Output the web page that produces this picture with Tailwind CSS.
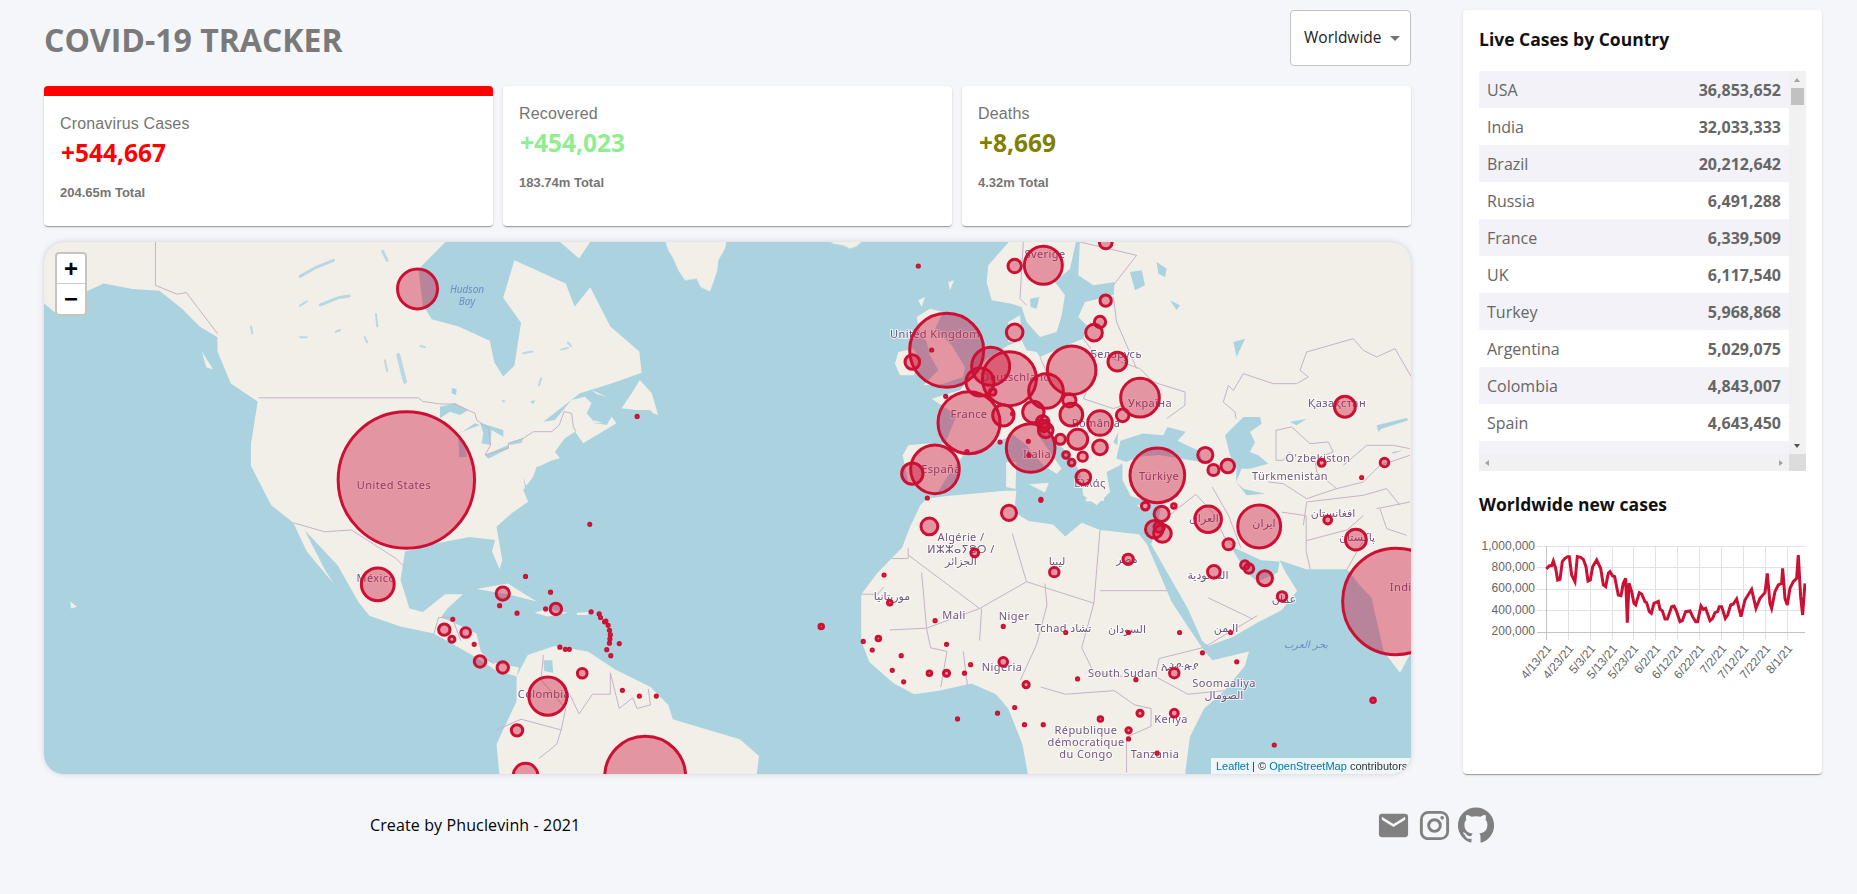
<!DOCTYPE html>
<html lang="en">
<head>
    <meta charset="UTF-8">
    <title>COVID-19 Tracker</title>
    <script src="https://cdn.jsdelivr.net/npm/@tailwindcss/browser@4"></script>
</head>
<body class="bg-[#f5f6fa] font-['Open_Sans',sans-serif] min-h-[894px]">
    <div class="flex justify-between pl-[44px] pr-[35px] pt-[10px]">
        <!-- left column -->
        <div class="w-[1367px]">
            <div class="flex justify-between items-center mb-[20px]">
                <h1 class="text-[32px] font-bold text-[#7a7a7a] leading-none mt-[4px]">COVID-19 TRACKER</h1>
                <div class="w-[121px] h-[56px] bg-white border border-[#c4c4c4] rounded flex items-center pl-[13px] gap-[9px] text-[15.5px] text-[#222] box-border">
                    <span>Worldwide</span>
                    <span class="w-0 h-0 border-l-[5px] border-r-[5px] border-t-[5px] border-l-transparent border-r-transparent border-t-[#757575]"></span>
                </div>
            </div>

            <div class="grid grid-cols-3 gap-[10px] h-[140px]">
                <div class="bg-white rounded overflow-hidden shadow-[0_2px_1px_-1px_rgba(0,0,0,.2),0_1px_1px_0_rgba(0,0,0,.14),0_1px_3px_0_rgba(0,0,0,.12)]">
                    <div class="h-[10px] bg-[#ff0000]"></div>
                    <div class="pt-[16px] px-[16px]">
                        <div class="font-['Liberation_Sans',sans-serif] text-[16px] leading-[24px] tracking-[.15px] text-[#757575]">Cronavirus Cases</div>
                        <div class="text-[24.5px] leading-[36px] font-bold text-[#ff0000] pl-[1px] mt-[-1px]">+544,667</div>
                        <div class="font-['Liberation_Sans',sans-serif] text-[13px] leading-[20px] font-bold text-[#757575] mt-[12px]">204.65m Total</div>
                    </div>
                </div>
                <div class="bg-white rounded overflow-hidden shadow-[0_2px_1px_-1px_rgba(0,0,0,.2),0_1px_1px_0_rgba(0,0,0,.14),0_1px_3px_0_rgba(0,0,0,.12)]">
                    <div class="pt-[16px] px-[16px]">
                        <div class="font-['Liberation_Sans',sans-serif] text-[16px] leading-[24px] tracking-[.15px] text-[#757575]">Recovered</div>
                        <div class="text-[24.5px] leading-[36px] font-bold text-[#90ee90] pl-[1px] mt-[-1px]">+454,023</div>
                        <div class="font-['Liberation_Sans',sans-serif] text-[13px] leading-[20px] font-bold text-[#757575] mt-[12px]">183.74m Total</div>
                    </div>
                </div>
                <div class="bg-white rounded overflow-hidden shadow-[0_2px_1px_-1px_rgba(0,0,0,.2),0_1px_1px_0_rgba(0,0,0,.14),0_1px_3px_0_rgba(0,0,0,.12)]">
                    <div class="pt-[16px] px-[16px]">
                        <div class="font-['Liberation_Sans',sans-serif] text-[16px] leading-[24px] tracking-[.15px] text-[#757575]">Deaths</div>
                        <div class="text-[24.5px] leading-[36px] font-bold text-[#808000] pl-[1px] mt-[-1px]">+8,669</div>
                        <div class="font-['Liberation_Sans',sans-serif] text-[13px] leading-[20px] font-bold text-[#757575] mt-[12px]">4.32m Total</div>
                    </div>
                </div>
            </div>

            <!-- map -->
            <div class="relative mt-[16px] h-[532px] rounded-[20px] overflow-hidden bg-[#aad3df] shadow-[0_0_8px_-4px_gray]">
                <svg id="map" class="block w-[1367px] h-[532px]" viewBox="44 242 1367 532" xmlns="http://www.w3.org/2000/svg">
                    <g class="blur-[0.4px]">
                    <!-- americas, traced in crop coords -->
                    <g transform="translate(30 230) scale(.4464 .3571)">
                        <g fill="#f2efe9">
                            <path d="M0,0 L0,215 L31,205 L60,235 L130,170 L165,150 L230,165 L290,170 L340,220 L380,270 L420,300 L420,340 L450,430 L510,480 L495,600 L495,660 L540,770 L590,820 L620,900 L680,990 L660,950 L615,840 L690,940 L735,1040 L760,1080 L830,1110 L905,1130 L990,1190 L1040,1230 L1090,1250 L1095,1225 L1030,1210 L1010,1180 L1000,1130 L950,1100 L920,1085 L935,1060 L970,1020 L930,1020 L880,1070 L850,1060 L830,980 L840,900 L900,880 L985,860 L1042,868 L1035,900 L1052,950 L1058,925 L1045,831 L1079,793 L1116,761 L1105,728 L1127,691 L1135,663 L1172,644 L1187,639 L1176,621 L1198,583 L1221,565 L1239,597 L1295,555 L1314,541 L1303,523 L1292,546 L1266,541 L1247,513 L1258,485 L1243,467 L1213,476 L1176,532 L1150,537 L1232,457 L1292,434 L1325,420 L1370,400 L1365,340 L1300,270 L1255,160 L1220,215 L1200,150 L1130,110 L1085,85 L1060,190 L1100,260 L1085,380 L1060,410 L1040,370 L1030,310 L960,270 L900,250 L880,210 L870,110 L930,34 L930,0 Z"/>
                            <path d="M1090,1250 L1115,1190 L1175,1165 L1250,1180 L1310,1230 L1390,1280 L1430,1330 L1440,1370 L1520,1400 L1590,1426 L1633,1473 L1624,1568 L1055,1568 L1045,1440 L1090,1320 Z"/>
                            <path d="M1175,20 L1230,80 L1262,20 Z"/>
                            <path d="M1325,499 L1348,457 L1366,420 L1393,457 L1407,518 L1396,513 L1389,504 L1359,504 Z"/>
                            <path d="M1000,1005 L1070,990 L1135,1040 L1070,1020 Z"/>
                            <path d="M1130,1072 L1160,1060 L1205,1072 L1160,1082 Z"/>
                            <path d="M1225,1072 L1250,1070 L1250,1078 L1225,1078 Z"/>
                            <path d="M385,340 L410,390 L395,385 Z"/>
                            <path d="M90,1040 L105,1055 L92,1060 Z"/>
                        </g>
                        <g fill="#aad3df">
                            <path d="M1150,1205 L1170,1205 1172,1240 1152,1235 Z"/>
                        </g>
                        <!-- canadian lakes -->
                        <g fill="none" stroke="#b9d9e2" stroke-linecap="round" stroke-linejoin="round">
                            <path vector-effect="non-scaling-stroke" stroke-width="4" d="M825,350 L840,425"/>
                            <path vector-effect="non-scaling-stroke" stroke-width="3" d="M605,130 L640,105 680,85"/>
                            <path vector-effect="non-scaling-stroke" stroke-width="3" d="M650,210 L690,190 715,185"/>
                            <path vector-effect="non-scaling-stroke" stroke-width="3" d="M790,60 L800,85"/>
                            <path vector-effect="non-scaling-stroke" stroke-width="2" d="M775,235 L778,270 M605,300 L620,300 M685,285 L695,280 M750,300 L755,315 M795,365 L800,395 M875,325 L885,328 M1105,345 L1125,340 M1205,315 L1212,325 M1145,415 L1140,435 M495,270 L498,290 M605,212 L620,200 M1190,335 L1205,330 M950,445 L952,458"/>
                        </g>
                        <g fill="none" stroke="#c6b3c6" stroke-width="1">
                            <path vector-effect="non-scaling-stroke" d="M281,34 L281,155 L330,180 L350,175 L420,290"/>
                            <path vector-effect="non-scaling-stroke" d="M512,470 L870,470 L880,480 L918,487"/>
                            <path vector-effect="non-scaling-stroke" d="M590,820 L660,845 L720,840 L770,880 L820,920 L840,945"/>
                            <path vector-effect="non-scaling-stroke" d="M905,1130 L915,1085 L950,1085 M950,1100 L965,1150 M1015,1195 L1040,1215"/>
                            <path vector-effect="non-scaling-stroke" d="M1150,1190 L1145,1260 L1200,1340 L1190,1400 L1100,1370 L1045,1400 M1190,1400 L1180,1440 L1140,1480 M1205,1290 L1230,1355 L1260,1300 L1300,1300 L1300,1240 L1320,1340 L1350,1310 L1360,1340 L1390,1330 L1385,1285"/>
                        </g>
                    </g>
                    <!-- greenland, iceland -->
                    <g transform="translate(660 242) scale(.3333)" fill="#f2efe9">
                        <path d="M15,-5 L25,25 40,50 55,85 75,115 110,110 122,135 150,148 162,115 172,85 175,55 195,20 200,-5 Z"/>
                        <path d="M505,-5 L520,5 550,10 570,20 590,12 610,-5 Z"/>
                    </g>
                    <!-- lakes and us-canada border -->
                    <g transform="translate(440 380) scale(.3333)">
                        <g fill="#aad3df">
                            <path d="M0,80 L45,70 85,90 60,105 30,95 0,115 Z"/>
                            <path d="M55,170 L75,185 80,230 58,232 Z M60,160 L105,130 120,135 75,152 Z"/>
                            <path d="M120,128 L190,150 190,170 155,150 150,195 125,190 130,160 Z"/>
                            <path d="M135,225 L205,195 207,205 145,236 Z"/>
                            <path d="M205,190 L250,175 245,188 210,195 Z"/>
                            <path d="M35,25 L50,28 48,45 35,40 Z M250,290 L265,340 258,345 Z M270,65 L285,60 280,72 Z M185,60 L198,62 190,68 Z"/>
                        </g>
                        <path fill="#f2efe9" d="M455,30 L500,50 470,42 Z M460,120 L490,130 465,128 Z M290,255 L335,240 295,260 Z"/>
                        <path fill="none" stroke="#c6b3c6" vector-effect="non-scaling-stroke" d="M0,72 L45,72 105,100 110,120 145,145 152,195 135,225 205,205 205,190 250,175 280,155 335,155 358,135 372,95 395,100 400,140 408,155"/>
                    </g>
                    <!-- africa, asia -->
                    <g transform="translate(800 230) scale(.4082 .3571)">
                        <g fill="#f2efe9">
                            <path d="M312,752 L360,745 430,738 500,730 530,730 525,790 560,815 620,825 650,858 690,820 735,840 830,852 850,880 880,960 910,1040 950,1110 985,1170 1010,1205 1100,1180 1090,1220 1040,1290 990,1340 955,1420 935,1600 570,1600 545,1440 510,1340 480,1300 420,1270 340,1290 280,1300 230,1270 170,1210 150,1150 150,1020 190,960 250,890 270,830 295,770 Z"/>
                            <path d="M775,0 L1700,0 L1700,1100 L1498,1180 1470,1240 1430,1180 1400,1030 1375,1000 1340,950 1240,950 1175,925 1190,960 1218,1010 1180,1065 1120,1100 1060,1140 1000,1165 985,1150 950,1060 900,960 860,880 875,830 885,770 850,760 810,745 790,700 790,655 775,640 780,560 760,450 Z"/>
                            <path d="M560,712 L610,708 600,735 Z"/>
                            <path d="M505,650 L530,650 528,725 505,720 Z"/>
                            <path d="M700,752 L745,748 745,758 700,760 Z"/>
                            <path d="M825,770 L860,765 840,785 Z"/>
                        </g>
                        <g fill="#aad3df">
                            <path d="M1055,885 L1130,925 1175,928 1170,960 1120,985 1095,960 1065,905 Z"/>
                        </g>
                    </g>
                    <!-- europe -->
                    <g transform="translate(880 242) scale(.3333)">
                        <g fill="#f2efe9">
                            <path d="M600,-10 L595,100 640,130 720,118 740,145 680,165 615,180 595,225 620,250 610,290 560,310 480,345 470,330 440,325 425,295 385,310 320,350 270,410 240,445 155,470 230,520 195,605 130,605 85,610 68,640 85,720 130,745 170,755 205,700 250,640 330,610 400,578 440,610 490,670 530,695 545,680 510,630 475,580 480,562 520,590 570,640 600,690 610,760 650,790 690,750 680,690 720,670 745,640 700,600 720,560 790,555 850,530 960,590 960,-10 Z"/>
                            <path d="M395,-10 L360,30 325,70 320,120 335,175 395,185 425,195 440,240 480,285 530,270 545,220 555,160 525,120 570,80 590,-10 Z"/>
                            <path d="M385,240 L420,220 428,292 385,300 Z"/>
                            <path d="M110,225 L150,200 190,210 165,260 215,310 255,375 250,405 190,425 130,430 175,385 150,340 140,300 120,270 Z"/>
                            <path d="M55,330 L100,320 125,360 100,400 60,400 45,365 Z"/>
                            <path d="M115,175 L135,165 125,195 Z"/>
                            <path d="M205,120 L222,115 210,145 Z"/>
                        </g>
                        <g fill="#aad3df">
                            <path d="M750,90 L785,85 795,130 765,145 Z"/>
                            <path d="M830,60 L860,80 855,105 835,95 Z"/>
                            <path d="M450,170 L478,165 470,200 452,195 Z"/>
                            <path d="M870,175 L900,190 890,205 Z"/>
                        </g>
                        <g fill="none" stroke="#c6b3c6">
                            <path vector-effect="non-scaling-stroke" d="M430,0 L420,170 L440,190 M480,345 L500,390 M610,290 L640,330 L780,380 L820,420 L915,450 L915,490 L860,530 M640,330 L645,395 L610,470 L700,500 L730,490 M600,0 L770,40 L700,130 M700,165 L710,240 L770,380"/>
                        </g>
                    </g>
                    <!-- black sea etc -->
                    <g transform="translate(800 230) scale(.4082 .3571)">
                        <path fill="#aad3df" d="M775,640 L785,590 840,570 890,575 900,552 945,565 925,590 980,620 985,650 930,640 880,630 830,635 800,650 Z"/>
                        <path fill="none" stroke="#c6b3c6" vector-effect="non-scaling-stroke" d="M265,910 L440,1060 555,985 720,1045 735,840 M555,985 L520,850 M298,960 L310,1115 440,1060 M220,1120 L310,1115 M150,1020 L190,1020 205,1000 M225,920 L265,920 265,890 M600,990 L605,1050 580,1160 M735,1010 L900,1010 M720,1045 L690,1170 720,1240 790,1250 M445,1060 L440,1150 M310,1115 L320,1170 L360,1180 L345,1280 M400,1180 L410,1275 M580,1160 L540,1260 M590,1280 L650,1300 L770,1290 L820,1330 L860,1340 L860,1390 L800,1420 L800,1520 M880,1200 L870,1250 L950,1300 L1040,1290 M880,1200 L985,1170 M995,1165 L1120,1080 M1000,1030 L1110,1090 M870,830 L970,740 L1010,790 L1040,860 L1060,885 M1010,720 L1050,800 L1080,890 M1180,790 L1240,800 L1240,900 L1250,950 M1240,870 L1340,840 L1380,800 M1380,870 L1340,950"/>
                    </g>
                    <!-- central asia -->
                    <g transform="translate(1200 242) scale(.3333)">
                        <path fill="#aad3df" d="M130,525 L180,525 185,545 150,570 165,600 150,630 175,640 205,665 150,680 125,680 108,720 130,740 195,755 140,760 108,720 110,680 90,640 75,580 Z"/>
                        <path fill="#aad3df" d="M530,550 L620,528 625,535 545,560 535,570 Z M575,630 L610,625 580,635 Z M270,540 L320,530 290,550 Z M100,300 L135,290 110,345 Z"/>
                        <path fill="none" stroke="#c6b3c6" vector-effect="non-scaling-stroke" d="M70,480 L85,430 100,445 130,395 220,425 290,425 325,405 300,385 320,330 460,290 490,325 530,345 585,320 640,415 M70,480 L105,510 108,530 M228,565 L275,555 330,605 385,600 400,630 345,650 350,690 410,740 M228,565 L228,655 250,655 270,630 M205,720 L250,725 320,770 410,740 490,720 M320,780 L310,850 M530,800 L630,780 M430,670 L500,610 580,610 630,620 M490,720 L540,670 630,640 M320,780 L490,760 560,740 600,790 M540,800 L560,860 620,880"/>
                    </g>
                    </g>

                    <!-- labels -->
                    <g font-family="'Noto Sans','DejaVu Sans',sans-serif" font-size="11" letter-spacing=".4" fill="#70557a" text-anchor="middle" dominant-baseline="middle" stroke="#ffffff" stroke-opacity=".7" stroke-width="2" paint-order="stroke">
                        <text x="394" y="486">United States</text>
                        <text x="376" y="579">México</text>
                        <text x="544" y="695">Colombia</text>
                        <text x="935" y="335">United Kingdom</text>
                        <text x="1016" y="378">Deutschland</text>
                        <text x="969" y="415">France</text>
                        <text x="941" y="470">España</text>
                        <text x="1037" y="455">Italia</text>
                        <text x="1045" y="255">Sverige</text>
                        <text x="1116" y="355">Беларусь</text>
                        <text x="1150" y="404">Україна</text>
                        <text x="1096" y="424">România</text>
                        <text x="1159" y="477">Türkiye</text>
                        <text x="1090" y="484">Ελλάς</text>
                        <text x="1337" y="404">Қазақстан</text>
                        <text x="1318" y="459">O'zbekiston</text>
                        <text x="1290" y="477">Türkmenistan</text>
                        <text x="1204" y="519">العراق</text>
                        <text x="1264" y="524">ایران</text>
                        <text x="1333" y="514">افغانستان</text>
                        <text x="1357" y="538">پاکستان</text>
                        <text x="1404" y="588">India</text>
                        <text x="961" y="538">Algérie /</text>
                        <text x="961" y="550">ⵍⵣⵣⴰⵢⴻⵔ /</text>
                        <text x="961" y="562">الجزائر</text>
                        <text x="1057" y="562">ليبيا</text>
                        <text x="1127" y="560">مصر</text>
                        <text x="1208" y="576">السعودية</text>
                        <text x="892" y="597">موريتانيا</text>
                        <text x="954" y="616">Mali</text>
                        <text x="1014" y="617">Niger</text>
                        <text x="1063" y="629">Tchad تشاد</text>
                        <text x="1127" y="630">السودان</text>
                        <text x="1226" y="629">اليمن</text>
                        <text x="1284" y="600">عمان</text>
                        <text x="1002" y="668">Nigeria</text>
                        <text x="1123" y="674">South Sudan</text>
                        <text x="1180" y="667">ኢትዮጵያ</text>
                        <text x="1224" y="684">Soomaaliya</text>
                        <text x="1224" y="696">الصومال</text>
                        <text x="1086" y="731">République</text>
                        <text x="1086" y="743">démocratique</text>
                        <text x="1086" y="755">du Congo</text>
                        <text x="1171" y="720">Kenya</text>
                        <text x="1155" y="755">Tanzania</text>
                    </g>
                    <g font-family="'Noto Sans','DejaVu Sans',sans-serif" font-size="10" font-style="italic" fill="#6a8cbf" text-anchor="middle" dominant-baseline="middle">
                        <text x="467" y="290">Hudson</text>
                        <text x="467" y="302">Bay</text>
                        <text x="1306" y="645">بحر العرب</text>
                    </g>
                    <g id="circles"></g>
                </svg>

                <!-- zoom control -->
                <div class="absolute left-[11px] top-[10px] w-[28px] border-2 border-[#c5c5c0] rounded bg-white font-['Liberation_Sans',sans-serif] text-black box-content">
                    <div class="h-[30px] flex items-center justify-center text-[24px] font-bold border-b border-[#ccc]">+</div>
                    <div class="h-[30px] flex items-center justify-center text-[24px] font-bold">−</div>
                </div>
                <div class="absolute right-0 bottom-0 h-[16px] w-[200px] bg-white/80 font-['Liberation_Sans',sans-serif] text-[11px] leading-[16px] pl-[5px] text-[#333] whitespace-nowrap overflow-hidden">
                    <span class="text-[#0078a8]">Leaflet</span> | © <span class="text-[#0078a8]">OpenStreetMap</span> contributors
                </div>
            </div>
        </div>

        <!-- right column -->
        <div class="w-[359px] h-[764px] bg-white rounded p-[16px] box-border shadow-[0_2px_1px_-1px_rgba(0,0,0,.2),0_1px_1px_0_rgba(0,0,0,.14),0_1px_3px_0_rgba(0,0,0,.12)]">
            <h3 class="text-[17.5px] leading-[26px] font-bold text-[#111]">Live Cases by Country</h3>
            <div class="grid grid-cols-[310px_17px] grid-rows-[383px_17px] mt-[19px] w-[327px] h-[400px]">
                <div class="overflow-hidden text-[#666] text-[16px]">
                    <div class="flex justify-between items-center px-[8px] h-[37px] bg-[#f3f2f8]"><span>USA</span><b>36,853,652</b></div>
                    <div class="flex justify-between items-center px-[8px] h-[37px]"><span>India</span><b>32,033,333</b></div>
                    <div class="flex justify-between items-center px-[8px] h-[37px] bg-[#f3f2f8]"><span>Brazil</span><b>20,212,642</b></div>
                    <div class="flex justify-between items-center px-[8px] h-[37px]"><span>Russia</span><b>6,491,288</b></div>
                    <div class="flex justify-between items-center px-[8px] h-[37px] bg-[#f3f2f8]"><span>France</span><b>6,339,509</b></div>
                    <div class="flex justify-between items-center px-[8px] h-[37px]"><span>UK</span><b>6,117,540</b></div>
                    <div class="flex justify-between items-center px-[8px] h-[37px] bg-[#f3f2f8]"><span>Turkey</span><b>5,968,868</b></div>
                    <div class="flex justify-between items-center px-[8px] h-[37px]"><span>Argentina</span><b>5,029,075</b></div>
                    <div class="flex justify-between items-center px-[8px] h-[37px] bg-[#f3f2f8]"><span>Colombia</span><b>4,843,007</b></div>
                    <div class="flex justify-between items-center px-[8px] h-[37px]"><span>Spain</span><b>4,643,450</b></div>
                    <div class="h-[37px] bg-[#f3f2f8]"></div>
                </div>
                <!-- scrollbars -->
                <div class="relative bg-[#f1f1f1]">
                    <span class="absolute left-[5px] top-[7px] w-0 h-0 border-l-[3.5px] border-r-[3.5px] border-b-[4px] border-l-transparent border-r-transparent border-b-[#a3a3a3]"></span>
                    <div class="absolute left-[2px] top-[17px] w-[13px] h-[17px] bg-[#c1c1c1]"></div>
                    <span class="absolute left-[5px] bottom-[6px] w-0 h-0 border-l-[3.5px] border-r-[3.5px] border-t-[4px] border-l-transparent border-r-transparent border-t-[#505050]"></span>
                </div>
                <div class="flex justify-between items-center px-[6px] bg-[#f1f1f1]">
                    <span class="w-0 h-0 border-t-[3.5px] border-b-[3.5px] border-r-[4px] border-t-transparent border-b-transparent border-r-[#a3a3a3]"></span>
                    <span class="w-0 h-0 border-t-[3.5px] border-b-[3.5px] border-l-[4px] border-t-transparent border-b-transparent border-l-[#a3a3a3]"></span>
                </div>
                <div class="bg-[#dcdcdc]"></div>
            </div>

            <h3 class="text-[17.5px] leading-[26px] font-bold text-[#111] tracking-[.05px] mt-[20px]">Worldwide new cases</h3>
            <svg class="block w-[327px] h-[170px] mt-[13px]" viewBox="1479 530 327 170" xmlns="http://www.w3.org/2000/svg">
                <g stroke="#e2e2e2" stroke-width="1">
                    <path d="M1537,546.5H1805M1537,567.5H1805M1537,589.5H1805M1537,610.5H1805"/>
                    <path d="M1568.5,546V640M1590.5,546V640M1612.5,546V640M1633.5,546V640M1655.5,546V640M1677.5,546V640M1699.5,546V640M1721.5,546V640M1743.5,546V640M1765.5,546V640M1787.5,546V640"/>
                </g>
                <path d="M1537,632.5H1805M1546.5,546V640" stroke="#c4c4c4" stroke-width="1" fill="none"/>
                <g font-family="'Liberation Sans',Arial,sans-serif" font-size="12" fill="#666" text-anchor="end" dominant-baseline="middle">
                    <text x="1535" y="546.5">1,000,000</text>
                    <text x="1535" y="567.5">800,000</text>
                    <text x="1535" y="589">600,000</text>
                    <text x="1535" y="610.5">400,000</text>
                    <text x="1535" y="632">200,000</text>
                </g>
                <g font-family="'Liberation Sans',Arial,sans-serif" font-size="12" fill="#666" text-anchor="end">
                    <text transform="translate(1552 649) rotate(-50)">4/13/21</text>
                    <text transform="translate(1574 649) rotate(-50)">4/23/21</text>
                    <text transform="translate(1596 649) rotate(-50)">5/3/21</text>
                    <text transform="translate(1618 649) rotate(-50)">5/13/21</text>
                    <text transform="translate(1639 649) rotate(-50)">5/23/21</text>
                    <text transform="translate(1661 649) rotate(-50)">6/2/21</text>
                    <text transform="translate(1683 649) rotate(-50)">6/12/21</text>
                    <text transform="translate(1705 649) rotate(-50)">6/22/21</text>
                    <text transform="translate(1727 649) rotate(-50)">7/2/21</text>
                    <text transform="translate(1749 649) rotate(-50)">7/12/21</text>
                    <text transform="translate(1771 649) rotate(-50)">7/22/21</text>
                    <text transform="translate(1793 649) rotate(-50)">8/1/21</text>
                </g>
                <g transform="translate(1450 500) scale(.3333)">
                    <path fill="none" stroke="#cc1034" stroke-width="9" stroke-linejoin="miter" d="M289,207 298,197 305,197 310,183 317,205 323,240 330,238 337,185 345,175 353,170 358,170 365,225 375,245 382,170 392,172 400,178 408,200 414,243 421,240 428,200 440,180 452,205 460,255 467,260 475,220 480,215 488,228 494,230 505,285 513,287 520,250 527,235 532,368 537,250 545,275 552,310 557,315 568,278 575,282 585,305 590,308 598,335 604,340 612,310 625,304 630,328 637,332 645,357 652,357 665,320 672,318 680,335 690,365 697,362 707,335 720,333 728,350 737,365 743,365 753,318 760,328 767,325 780,362 788,355 795,338 803,335 808,320 815,320 826,355 833,345 842,315 850,312 860,297 873,350 885,300 905,268 918,325 930,295 945,278 952,220 960,310 965,325 975,275 985,255 995,250 998,205 1005,295 1012,315 1020,265 1030,245 1040,235 1045,165 1052,290 1058,345 1065,250"/>
                </g>
            </svg>
        </div>
    </div>

    <!-- footer -->
    <div class="flex justify-between items-center pl-[370px] pr-[363px] mt-[33px]">
        <p class="text-[16px] tracking-[.12px] text-black">Create by Phuclevinh - 2021</p>
        <div class="flex items-center gap-[6px] text-[#808080]">
            <svg class="w-[35px] h-[35px]" viewBox="0 0 24 24" fill="currentColor"><path d="M20 4H4c-1.1 0-1.99.9-1.99 2L2 18c0 1.1.9 2 2 2h16c1.1 0 2-.9 2-2V6c0-1.1-.9-2-2-2zm0 4l-8 5-8-5V6l8 5 8-5v2z"/></svg>
            <svg class="w-[35px] h-[35px]" viewBox="0 0 24 24" fill="currentColor"><path d="M7.8 2h8.4C19.4 2 22 4.6 22 7.8v8.4a5.8 5.8 0 0 1-5.8 5.8H7.8C4.6 22 2 19.4 2 16.2V7.8A5.8 5.8 0 0 1 7.8 2m-.2 2A3.6 3.6 0 0 0 4 7.6v8.8C4 18.39 5.61 20 7.6 20h8.8a3.6 3.6 0 0 0 3.6-3.6V7.6C20 5.61 18.39 4 16.4 4H7.6m9.65 1.5a1.25 1.25 0 0 1 1.25 1.25A1.25 1.25 0 0 1 17.25 8 1.25 1.25 0 0 1 16 6.75a1.25 1.25 0 0 1 1.25-1.25M12 7a5 5 0 0 1 5 5 5 5 0 0 1-5 5 5 5 0 0 1-5-5 5 5 0 0 1 5-5m0 2a3 3 0 0 0-3 3 3 3 0 0 0 3 3 3 3 0 0 0 3-3 3 3 0 0 0-3-3z"/></svg>
            <svg class="w-[36px] h-[36px]" viewBox="0 0 24 24" fill="currentColor"><path d="M12 .3a12 12 0 0 0-3.8 23.4c.6.1.8-.3.8-.6v-2c-3.3.7-4-1.6-4-1.6-.6-1.4-1.4-1.8-1.4-1.8-1-.7.1-.7.1-.7 1.2 0 1.9 1.2 1.9 1.2 1 1.8 2.8 1.3 3.5 1 0-.8.4-1.3.7-1.6-2.7-.3-5.5-1.3-5.5-6 0-1.2.5-2.3 1.3-3.1-.2-.4-.6-1.6 0-3.2 0 0 1-.3 3.4 1.2a11.5 11.5 0 0 1 6 0c2.3-1.5 3.3-1.2 3.3-1.2.6 1.6.2 2.8 0 3.2.9.8 1.3 1.9 1.3 3.2 0 4.6-2.8 5.6-5.5 5.9.5.4.9 1 .9 2.2v3.3c0 .3.1.7.8.6A12 12 0 0 0 12 .3"/></svg>
        </div>
    </div>

    <script>
        // [cx, cy, r] read off the crops, converted to page coords below
        const AMERICAS = [[868,165,47],[843,700,155],[779,992,39],[1059,1018,17],[1178,1061,15],[928,1119,15],[945,1146,9],[976,1127,13],[1008,1208,15],[1059,1225,15],[1237,1241,13],[1160,1305,45],[1091,1401,15],[1378,1531,93],[1110,1528,30]];
        const AMERICAS_DOTS = [[1360,522],[1254,824],[1110,970],[1166,1014],[1052,1052],[1155,1061],[1257,1069],[1091,1073],[947,1090],[995,1160],[1187,1168],[1199,1174],[1208,1174],[1275,1075],[1278,1085],[1290,1095],[1287,1097],[1295,1107],[1298,1121],[1300,1133],[1299,1145],[1298,1157],[1320,1158],[1292,1175],[1327,1289],[1365,1305],[1403,1305],[1301,1192]];
        const EUROPE = [[490,70,60],[404,72,23],[677,176,20],[660,240,20],[642,272,28],[404,271,28],[200,325,114],[97,360,25],[332,373,60],[300,420,45],[388,410,84],[338,450,13],[575,385,76],[498,447,55],[267,542,96],[370,520,35],[460,510,35],[568,475,23],[574,518,37],[488,540,22],[492,552,20],[497,565,25],[452,618,76],[660,543,40],[593,592,33],[660,616,25],[541,592,18],[728,520,22],[780,467,61],[712,359,31],[558,639,13],[608,644,17],[575,662,13],[610,706,25],[165,682,76],[97,695,35],[832,700,85]];
        const EUROPE_DOTS = [[115,72],[155,324],[197,463],[398,515],[261,629],[360,600],[445,598],[447,640],[142,768],[483,772]];
        const REST = [[749,35,18],[993,630,21],[1048,661,19],[1013,672,16],[846,773,12],[916,773,8],[886,795,21],[1000,810,35],[1125,830,55],[868,838,24],[880,832,15],[888,850,24],[1050,880,16],[1014,957,18],[1090,938,13],[1100,948,14],[1139,975,21],[1181,1026,14],[1335,495,28],[1278,652,11],[1432,651,13],[1293,812,12],[1362,867,28],[1460,1040,133],[317,830,23],[512,792,21],[428,904,12],[623,958,14],[804,922,15],[498,1209,13],[359,1241,10],[317,1241,8],[554,1273,10],[917,1353,12],[917,1241,14],[833,1353,10],[805,1401,9],[192,1144,8],[220,1044,8],[52,1110,8],[736,1369,8],[1404,1317,8]];
        const REST_DOTS = [[1376,693],[590,757],[206,966],[331,1094],[498,1110],[651,1127],[805,1127],[930,1127],[1055,1127],[155,1152],[177,1176],[248,1192],[359,1160],[418,1217],[403,1241],[226,1233],[254,1265],[680,1257],[823,1259],[986,1184],[1070,1209],[526,1337],[484,1353],[386,1369],[550,1385],[596,1385],[805,1425],[875,1465],[1162,1442]];

        const layer = document.getElementById('circles');

        function addCircle(x, y, r) {
            const c = document.createElementNS('http://www.w3.org/2000/svg', 'circle');
            c.setAttribute('cx', x);
            c.setAttribute('cy', y);
            c.setAttribute('r', r);
            c.setAttribute('fill', '#cc1034');
            c.setAttribute('fill-opacity', '.4');
            c.setAttribute('stroke', '#cc1034');
            c.setAttribute('stroke-width', '3');
            layer.appendChild(c);
        }

        AMERICAS.forEach(([x, y, r]) => addCircle(30 + x / 2.24, 230 + y / 2.8, r / 2.24 - 1));
        AMERICAS_DOTS.forEach(([x, y]) => addCircle(30 + x / 2.24, 230 + y / 2.8, 1.1));
        EUROPE.forEach(([x, y, r]) => addCircle(880 + x / 3, 242 + y / 3, r / 3 - 1));
        EUROPE_DOTS.forEach(([x, y]) => addCircle(880 + x / 3, 242 + y / 3, 1.1));
        REST.forEach(([x, y, r]) => addCircle(800 + x / 2.45, 230 + y / 2.8, r / 2.45 - 1));
        REST_DOTS.forEach(([x, y]) => addCircle(800 + x / 2.45, 230 + y / 2.8, 1.1));
    </script>
</body>
</html>
